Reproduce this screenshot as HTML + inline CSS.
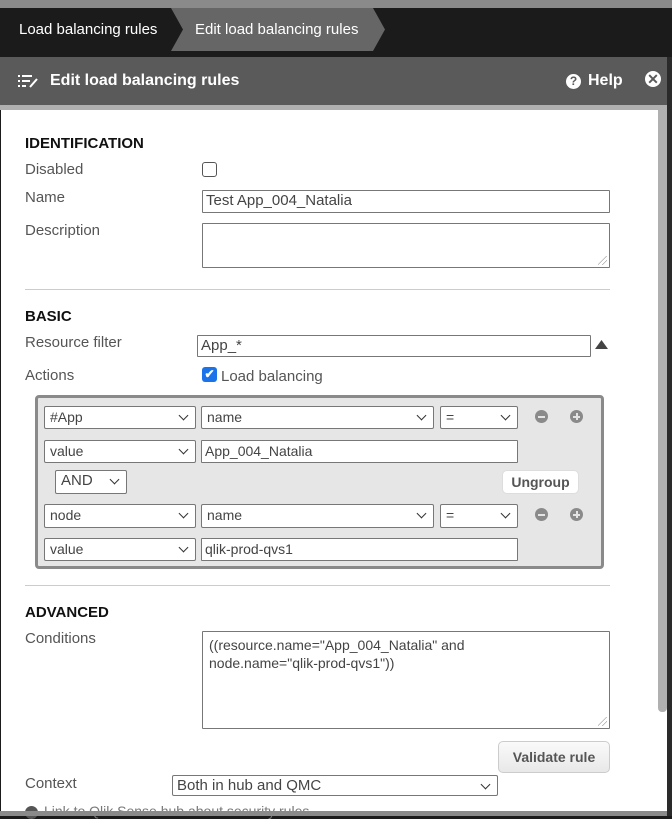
<!DOCTYPE html>
<html><head><style>
*{box-sizing:border-box;margin:0;padding:0}
body{width:672px;height:816px;overflow:hidden;background:#1b1b1b;font-family:"Liberation Sans",sans-serif;position:relative}
.a{position:absolute}
.lbl{position:absolute;color:#555;font-size:15px;left:25px}
.h{position:absolute;left:25px;font-weight:bold;font-size:15px;color:#111}
.in{position:absolute;border:1px solid #777;background:#fff;font-size:15px;color:#444;padding-left:3px;line-height:20px;border-radius:1px}
.sel{position:absolute;border:1px solid #777;background:#fff;font-size:14px;color:#444;padding-left:5px;line-height:20px;border-radius:2px}
.sel:after{content:"";position:absolute;right:8px;top:5px;width:6px;height:6px;border-right:1.5px solid #333;border-bottom:1.5px solid #333;transform:rotate(45deg)}
.hr{position:absolute;left:25px;width:585px;height:1px;background:#ccc}
.circ{position:absolute;width:13px;height:13px;border-radius:50%;background:#8a8a8a}
.circ:before{content:"";position:absolute;left:3px;top:5.5px;width:7px;height:2px;background:#e4e4e4}
.plus:after{content:"";position:absolute;left:5.5px;top:3px;width:2px;height:7px;background:#e4e4e4}
.btn{position:absolute;border:1px solid #ccc;border-radius:5px;font-weight:bold;color:#555;font-size:14px;text-align:center}
.rs{position:absolute;right:2px;bottom:2px;width:9px;height:9px;background:linear-gradient(135deg,transparent 45%,#777 48%,transparent 52%,transparent 70%,#777 73%,transparent 77%)}
</style></head><body>
<div class="a" style="left:0;top:0;width:672px;height:8px;background:#8a8a8a"></div>
<div class="a" style="left:0;top:8px;width:672px;height:43px;background:#1b1b1b"></div>
<svg class="a" style="left:0;top:8px" width="400" height="43"><polygon points="171,0 373,0 385,21.5 373,43 171,43 183,21.5" fill="#666"/></svg>
<div class="a" style="left:19px;top:21px;color:#fff;font-size:15px">Load balancing rules</div>
<div class="a" style="left:195px;top:21px;color:#fff;font-size:15px">Edit load balancing rules</div>
<div class="a" style="left:0;top:57px;width:668px;height:48px;background:#5a5a5a"></div>
<div class="a" style="left:0;top:105px;width:668px;height:5px;background:#b0b0b0"></div>
<svg class="a" style="left:18px;top:74px" width="22" height="14"><g stroke="#fff" stroke-width="2"><line x1="0" y1="2" x2="2" y2="2"/><line x1="4" y1="2" x2="14" y2="2"/><line x1="0" y1="7" x2="2" y2="7"/><line x1="4" y1="7" x2="12" y2="7"/><line x1="0" y1="12" x2="2" y2="12"/><line x1="4" y1="12" x2="8" y2="12"/><line x1="12" y1="13" x2="19" y2="5"/></g></svg>
<div class="a" style="left:50px;top:72px;color:#fff;font-size:16px;font-weight:bold">Edit load balancing rules</div>
<div class="a" style="left:566px;top:74px;width:15px;height:15px;border-radius:50%;background:#fff;color:#5a5a5a;font-size:12px;font-weight:bold;text-align:center;line-height:15px">?</div>
<div class="a" style="left:588px;top:72px;color:#fff;font-size:16px;font-weight:bold">Help</div>
<div class="a" style="left:645px;top:71px;width:16px;height:16px;border-radius:50%;background:#fff;color:#5a5a5a;font-size:14px;font-weight:bold;text-align:center;line-height:16px">✕</div>
<div class="a" style="left:1px;top:110px;width:666px;height:701px;background:#fff"></div>
<div class="a" style="left:658px;top:110px;width:9px;height:602px;background:#b0b0b0;border-radius:0 0 4px 4px"></div>

<div class="h" style="top:135px">IDENTIFICATION</div>
<div class="lbl" style="top:161px">Disabled</div>
<div class="a" style="left:202px;top:162px;width:15px;height:15px;border:1px solid #555;border-radius:3px"></div>
<div class="lbl" style="top:189px">Name</div>
<div class="in" style="left:202px;top:190px;width:408px;height:23px">Test App_004_Natalia</div>
<div class="lbl" style="top:222px">Description</div>
<div class="in" style="left:202px;top:223px;width:408px;height:45px"><div class="rs"></div></div>
<div class="hr" style="top:289px"></div>
<div class="h" style="top:308px">BASIC</div>
<div class="lbl" style="top:334px">Resource filter</div>
<div class="in" style="left:197px;top:335px;width:394px;height:22px">App_*</div>
<svg class="a" style="left:595px;top:340px" width="13" height="9"><polygon points="0,9 6.5,0 13,9" fill="#444"/></svg>
<div class="lbl" style="top:367px">Actions</div>
<div class="a" style="left:202px;top:367px;width:15px;height:15px;background:#1a73e8;border-radius:3px;color:#fff;font-size:12px;text-align:center;line-height:15px;font-weight:bold">✔</div>
<div class="a" style="left:221px;top:368px;color:#555;font-size:15px">Load balancing</div>

<div class="a" style="left:35px;top:395px;width:569px;height:174px;background:#e6e6e6;border:3px solid #8a8a8a;border-radius:4px"></div>
<div class="sel" style="left:44px;top:406px;width:152px;height:23px">#App</div>
<div class="sel" style="left:201px;top:406px;width:233px;height:23px">name</div>
<div class="sel" style="left:440px;top:406px;width:78px;height:23px">=</div>
<div class="circ" style="left:535px;top:410px"></div>
<div class="circ plus" style="left:570px;top:410px"></div>
<div class="sel" style="left:44px;top:440px;width:152px;height:23px">value</div>
<div class="in" style="left:201px;top:440px;width:317px;height:23px;font-size:14px">App_004_Natalia</div>
<div class="sel" style="left:55px;top:470px;width:72px;height:24px;font-size:15px">AND</div>
<div class="btn" style="left:502px;top:470px;width:77px;height:24px;line-height:22px;background:#fff;border-color:#ddd">Ungroup</div>
<div class="sel" style="left:44px;top:504px;width:152px;height:24px">node</div>
<div class="sel" style="left:201px;top:504px;width:233px;height:24px">name</div>
<div class="sel" style="left:440px;top:504px;width:78px;height:24px">=</div>
<div class="circ" style="left:535px;top:508px"></div>
<div class="circ plus" style="left:570px;top:508px"></div>
<div class="sel" style="left:44px;top:538px;width:152px;height:23px">value</div>
<div class="in" style="left:201px;top:538px;width:317px;height:23px;font-size:14px">qlik-prod-qvs1</div>

<div class="hr" style="top:585px"></div>
<div class="h" style="top:604px">ADVANCED</div>
<div class="lbl" style="top:630px">Conditions</div>
<div class="in" style="left:202px;top:631px;width:408px;height:98px;font-size:14px;line-height:18px;padding:4px 100px 4px 6px">((resource.name="App_004_Natalia" and node.name="qlik-prod-qvs1"))<div class="rs"></div></div>
<div class="btn" style="left:498px;top:741px;width:112px;height:32px;line-height:30px;background:linear-gradient(#fafafa,#e8e8e8)">Validate rule</div>
<div class="lbl" style="top:775px">Context</div>
<div class="sel" style="left:172px;top:775px;width:326px;height:21px;font-size:15px;padding-left:4px;line-height:19px">Both in hub and QMC</div>
<div class="a" style="left:25px;top:806px;width:13px;height:13px;border-radius:50%;background:#555"></div>
<div class="a" style="left:44px;top:803px;color:#777;font-size:14px">Link to Qlik Sense hub about security rules</div>
<div class="a" style="left:0;top:811px;width:672px;height:5px;background:#8a8a8a"></div>
<div class="a" style="left:667px;top:57px;width:5px;height:759px;background:#2a2a2a"></div>
</body></html>
